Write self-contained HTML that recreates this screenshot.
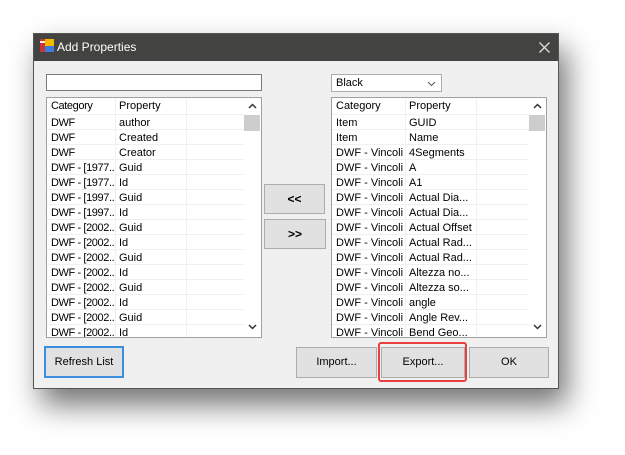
<!DOCTYPE html>
<html><head><style>
*{margin:0;padding:0;box-sizing:border-box}
body{width:625px;height:455px;background:#fff;position:relative;overflow:hidden;font-family:"Liberation Sans",Arial,sans-serif;font-size:11px;color:#000}
.win{position:absolute;left:33px;top:33px;width:526px;height:356px;background:#f0f0f0;border:1px solid #555;box-shadow:8px 16px 28px rgba(0,0,0,.55)}
.title{position:absolute;left:0;top:0;width:100%;height:27px;background:#434341;color:#fff;font-size:12px}
.title span{position:absolute;left:23px;top:6px}
.abs{position:absolute}
.list{position:absolute;background:#fff;border:1px solid #a0a0a0;overflow:hidden}
.row{position:absolute;left:0;height:15px;width:197px;border-bottom:1px solid #f0f0f0}
.row div{position:absolute;top:2px;white-space:nowrap;overflow:hidden}
#L .row div:first-child{letter-spacing:-0.4px}
.vl{position:absolute;top:0;width:1px;height:100%;background:#f0f0f0}
.sb{position:absolute;right:0;top:0;width:17px;height:100%;background:#fff}
.btn{position:absolute;background:#e1e1e1;border:1px solid #adadad;text-align:center;font-size:11px}
</style></head><body>
<div class="win">
 <div class="title">
  <svg class="abs" style="left:6px;top:5px" width="14" height="13"><rect x="0" y="0" width="5" height="13" fill="#c33"/><rect x="0" y="2" width="5" height="2" fill="#eee"/><rect x="5" y="0" width="9" height="7" fill="#f5b800"/><rect x="5" y="7" width="9" height="6" fill="#3a7de0"/></svg>
  <span>Add Properties</span>
  <svg class="abs" style="left:505px;top:8px" width="11" height="11"><path d="M0.5 0.5L10.5 10.5M10.5 0.5L0.5 10.5" stroke="#ddd" stroke-width="1.3"/></svg>
 </div>
 <div class="abs" style="left:12px;top:40px;width:216px;height:17px;background:#fff;border:1px solid #7a7a7a"></div>
 <div class="abs" style="left:297px;top:40px;width:111px;height:18px;background:#fff;border:1px solid #adadad"><span class="abs" style="left:4px;top:2px">Black</span><svg class="abs" style="left:95px;top:6px" width="9" height="6"><path d="M1 1L4.5 4.5L8 1" stroke="#555" fill="none"/></svg></div>
 <div class="list" id="L" style="left:12px;top:63px;width:216px;height:241px"></div>
 <div class="list" id="R" style="left:297px;top:63px;width:216px;height:241px"></div>
 <div class="btn" style="left:230px;top:150px;width:61px;height:30px;line-height:28px;font-weight:bold;font-size:12px">&lt;&lt;</div>
 <div class="btn" style="left:230px;top:185px;width:62px;height:30px;line-height:28px;font-weight:bold;font-size:12px">&gt;&gt;</div>
 <div class="btn" style="left:10px;top:312px;width:80px;height:32px;line-height:29px;border:2px solid #3c8ede">Refresh List</div>
 <div class="btn" style="left:262px;top:313px;width:81px;height:31px;line-height:29px">Import...</div>
 <div class="abs" style="left:344px;top:308px;width:89px;height:40px;border:2px solid #e84040;border-radius:3px"></div>
 <div class="btn" style="left:347px;top:313px;width:84px;height:31px;line-height:29px">Export...</div>
 <div class="btn" style="left:435px;top:313px;width:80px;height:31px;line-height:29px">OK</div>
</div>
<script>
function build(id,c1,rows){
 var el=document.getElementById(id),h='';
 h+='<div class="vl" style="left:'+c1+'px"></div><div class="vl" style="left:'+(c1+71)+'px"></div>';
 var all=[["Category","Property"]].concat(rows);
 all.forEach(function(r,i){h+='<div class="row" style="'+(i==0?'top:0;height:17px':'top:'+(17+(i-1)*15)+'px')+'"><div style="left:4px;width:'+(c1-4)+'px">'+r[0]+'</div><div style="left:'+(c1+4)+'px;width:66px">'+r[1]+'</div></div>';});
 h+='<div class="sb"><svg style="position:absolute;left:4px;top:5px" width="9" height="6"><path d="M1 5L4.5 1.5L8 5" stroke="#333" stroke-width="1.5" fill="none"/></svg><div style="position:absolute;left:0;top:17px;width:16px;height:16px;background:#cdcdcd"></div><svg style="position:absolute;left:4px;top:226px" width="9" height="6"><path d="M1 1L4.5 4.5L8 1" stroke="#333" stroke-width="1.5" fill="none"/></svg></div>';
 el.innerHTML=h;
}
build('L',68,[["DWF","author"],["DWF","Created"],["DWF","Creator"],["DWF - [1977...","Guid"],["DWF - [1977...","Id"],["DWF - [1997...","Guid"],["DWF - [1997...","Id"],["DWF - [2002...","Guid"],["DWF - [2002...","Id"],["DWF - [2002...","Guid"],["DWF - [2002...","Id"],["DWF - [2002...","Guid"],["DWF - [2002...","Id"],["DWF - [2002...","Guid"],["DWF - [2002...","Id"]]);
build('R',73,[["Item","GUID"],["Item","Name"],["DWF - Vincoli","4Segments"],["DWF - Vincoli","A"],["DWF - Vincoli","A1"],["DWF - Vincoli","Actual Dia..."],["DWF - Vincoli","Actual Dia..."],["DWF - Vincoli","Actual Offset"],["DWF - Vincoli","Actual Rad..."],["DWF - Vincoli","Actual Rad..."],["DWF - Vincoli","Altezza no..."],["DWF - Vincoli","Altezza so..."],["DWF - Vincoli","angle"],["DWF - Vincoli","Angle Rev..."],["DWF - Vincoli","Bend Geo..."]]);
</script>
</body></html>
